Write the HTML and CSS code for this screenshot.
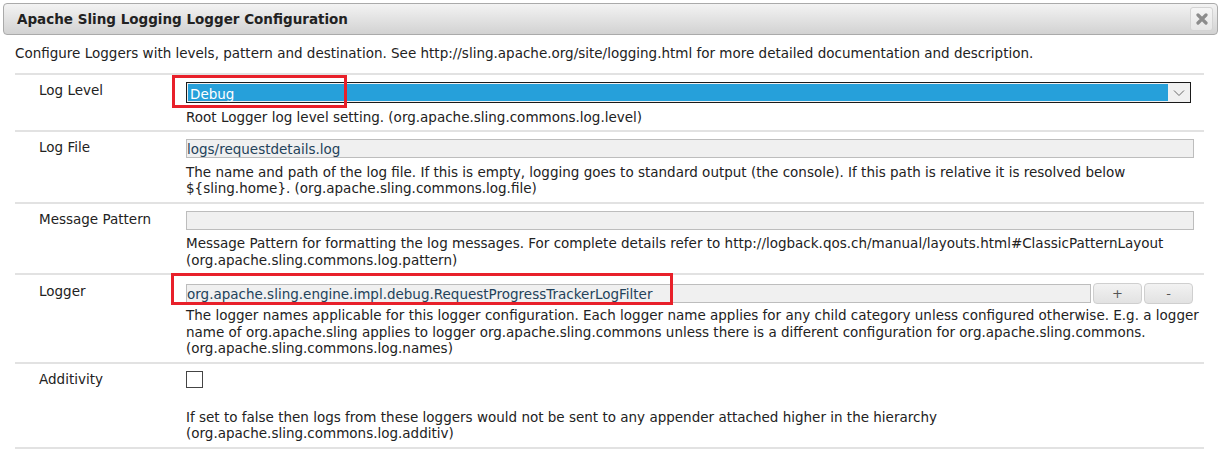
FILE: index.html
```html
<!DOCTYPE html>
<html>
<head>
<meta charset="utf-8">
<link rel="stylesheet" href="styles.css">
</head>
<body>
<div class="dialog">
  <div class="titlebar">
    <span class="title">Apache Sling Logging Logger Configuration</span>
    <span class="close"><svg width="12" height="12" viewBox="0 0 12 12"><path d="M2 2 L10 10 M10 2 L2 10" stroke="#8c8c8c" stroke-width="3.2" stroke-linecap="round"/></svg></span>
  </div>
  <div class="content">
    <p class="intro">Configure Loggers with levels, pattern and destination. See http://sling.apache.org/site/logging.html for more detailed documentation and description.</p>
    <div class="table">
      <div class="row">
        <div class="label">Log Level</div>
        <div class="field">
          <div class="select-wrap">
            <div class="select"><span class="sel-val">Debug</span><span class="arrow"><svg width="12" height="8" viewBox="0 0 12 8"><path d="M1 1.5 L6 6.5 L11 1.5" fill="none" stroke="#6a6a6a" stroke-width="1"/></svg></span></div>
            <div class="hl hl-level"></div>
          </div>
          <div class="desc">Root Logger log level setting. (org.apache.sling.commons.log.level)</div>
        </div>
      </div>
      <div class="row">
        <div class="label">Log File</div>
        <div class="field">
          <div class="input">logs/requestdetails.log</div>
          <div class="desc">The name and path of the log file. If this is empty, logging goes to standard output (the console). If this path is relative it is resolved below ${sling.home}. (org.apache.sling.commons.log.file)</div>
        </div>
      </div>
      <div class="row">
        <div class="label">Message Pattern</div>
        <div class="field">
          <div class="input"></div>
          <div class="desc">Message Pattern for formatting the log messages. For complete details refer to http://logback.qos.ch/manual/layouts.html#ClassicPatternLayout (org.apache.sling.commons.log.pattern)</div>
        </div>
      </div>
      <div class="row row-logger">
        <div class="label">Logger</div>
        <div class="field">
          <div class="logger-line">
            <div class="input logger-input">org.apache.sling.engine.impl.debug.RequestProgressTrackerLogFilter</div>
            <button class="btn">+</button>
            <button class="btn">-</button>
            <div class="hl hl-logger"></div>
          </div>
          <div class="desc desc-logger">The logger names applicable for this logger configuration. Each logger name applies for any child category unless configured otherwise. E.g. a logger name of org.apache.sling applies to logger org.apache.sling.commons unless there is a different configuration for org.apache.sling.commons. (org.apache.sling.commons.log.names)</div>
        </div>
      </div>
      <div class="row">
        <div class="label">Additivity</div>
        <div class="field">
          <div class="checkbox"></div>
          <div class="desc desc-add">If set to false then logs from these loggers would not be sent to any appender attached higher in the hierarchy (org.apache.sling.commons.log.additiv)</div>
        </div>
      </div>
    </div>
  </div>
</div>
</body>
</html>
```

FILE: styles.css
```css
html, body {
  margin: 0;
  padding: 0;
  background: #fff;
}
body {
  font-family: "DejaVu Sans", Verdana, sans-serif;
  font-size: 13.5px;
  color: #222;
}
.dialog {
  width: 1222px;
  padding: 3px 4px 0 3px;
  box-sizing: border-box;
}
.titlebar {
  height: 32px;
  border: 1px solid #aaa;
  border-radius: 4px;
  background: linear-gradient(#f3f3f3, #d2d2d2);
  display: flex;
  align-items: center;
  justify-content: space-between;
  padding: 0 4px 0 13px;
  box-sizing: border-box;
}
.title {
  font-weight: bold;
  color: #222;
}
.close {
  width: 23px;
  height: 24px;
  border: 1px solid #d3d3d3;
  border-radius: 3px;
  background: linear-gradient(#f5f5f5, #e6e6e6);
  display: flex;
  align-items: center;
  justify-content: center;
  box-sizing: border-box;
}
.content {
  padding: 0 14px 0 12px;
}
.intro {
  margin: 10px 0 12px 0;
  line-height: 16px;
}
.table {
  border-top: 2px solid #e2e2e2;
}
.row {
  display: flex;
  border-bottom: 2px solid #e2e2e2;
  padding: 7px 0 5px 0;
}
.row-logger {
  padding-top: 8px;
}
.label {
  width: 147px;
  padding-left: 24px;
  line-height: 17px;
  flex-shrink: 0;
}
.field {
  flex: 1;
  padding-right: 5px;
}
.select-wrap {
  position: relative;
}
.select {
  height: 21px;
  border: 1px solid #1a1a1a;
  width: 1005px;
  box-sizing: border-box;
  display: flex;
  background: #f0f0f0;
  padding: 1px;
}
.sel-val {
  flex: 1;
  background: #26a0da;
  color: #fff;
  padding-left: 2px;
  line-height: 20px;
}
.arrow {
  width: 21px;
  display: flex;
  align-items: center;
  justify-content: center;
}
.hl {
  position: absolute;
  border: 3px solid #e8202a;
  box-sizing: border-box;
}
.hl-level {
  left: -14px;
  top: -7px;
  width: 175px;
  height: 33px;
}
.input {
  height: 19px;
  border: 1px solid #bdbdbd;
  background: #f0f0f0;
  box-sizing: border-box;
  width: 1008px;
  line-height: 18px;
  color: #23425a;
  padding-left: 0;
  white-space: nowrap;
  overflow: hidden;
}
.logger-line {
  position: relative;
  display: flex;
  align-items: center;
  gap: 2px;
}
.logger-input {
  width: 905px;
  flex-shrink: 0;
}
.btn {
  height: 21px;
  width: 49px;
  border: 1px solid #cfcfcf;
  border-radius: 4px;
  background: linear-gradient(#f2f2f2, #e2e2e2);
  font-family: "DejaVu Sans", Verdana, sans-serif;
  font-size: 13px;
  line-height: 17px;
  color: #555;
  padding: 0;
}
.hl-logger {
  left: -15px;
  top: -10px;
  width: 502px;
  height: 32px;
}
.desc {
  margin-top: 5.5px;
  line-height: 16.5px;
}
.desc-logger {
  margin-top: 3px;
}
.checkbox {
  width: 15px;
  height: 15px;
  border: 1px solid #444;
}
.desc-add {
  margin-top: 21px;
}
```
